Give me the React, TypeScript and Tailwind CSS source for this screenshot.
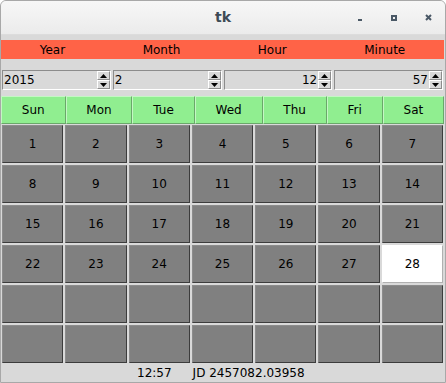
import React from "react";

const labels = ["Year", "Month", "Hour", "Minute"];
const days = ["Sun", "Mon", "Tue", "Wed", "Thu", "Fri", "Sat"];

const spins = [
  { value: "2015", right: false },
  { value: "2", right: false },
  { value: "12", right: true },
  { value: "57", right: true },
];

// February 2015 starts on a Sunday
const cells: (number | null)[] = Array.from({ length: 42 }, (_, i) =>
  i < 28 ? i + 1 : null
);

const Spinbox: React.FC<{ value: string; right: boolean }> = ({ value, right }) => (
  <div className="flex-1 h-[20px] flex border border-t-[#8c8c8c] border-l-[#8c8c8c] border-b-white border-r-white bg-[#d9d9d9]">
    <div
      className={
        "flex-1 flex items-center px-[1px] text-[12px] text-black " +
        (right ? "justify-end" : "justify-start")
      }
    >
      {value}
    </div>
    <div className="w-[13px] flex flex-col">
      <div className="flex-1 flex items-center justify-center bg-[#d9d9d9] border border-t-white border-l-white border-b-[#8c8c8c] border-r-[#8c8c8c]">
        <svg width="7" height="4" viewBox="0 0 7 4">
          <path d="M3.5 0 L7 4 L0 4 Z" fill="#000" />
        </svg>
      </div>
      <div className="flex-1 flex items-center justify-center bg-[#d9d9d9] border border-t-white border-l-white border-b-[#8c8c8c] border-r-[#8c8c8c]">
        <svg width="7" height="4" viewBox="0 0 7 4">
          <path d="M0 0 L7 0 L3.5 4 Z" fill="#000" />
        </svg>
      </div>
    </div>
  </div>
);

export default function App() {
  return (
    <div
      className="w-[446px] h-[383px] flex flex-col bg-[#d9d9d9] border border-[#a8a8a8] rounded-t-[6px] overflow-hidden"
      style={{ fontFamily: '"DejaVu Sans", sans-serif' }}
    >
      {/* Title bar */}
      <div className="h-[34px] shrink-0 relative flex items-center justify-center bg-gradient-to-b from-[#f7f7f7] to-[#ebebeb] border-b border-[#dcdcdc]">
        <span className="text-[14px] font-bold text-[#3d4a56]">tk</span>
        <div className="absolute right-0 top-0 h-full flex items-center">
          <div className="w-[34px] flex justify-center pt-[4px]">
            <div className="w-[4px] h-[2px] bg-[#4a5866]" />
          </div>
          <div className="w-[34px] flex justify-center">
            <div className="w-[6px] h-[6px] border-2 border-[#4a5866]" />
          </div>
          <div className="w-[34px] flex justify-center">
            <svg width="7" height="7" viewBox="0 0 7 7">
              <path d="M1 1 L6 6 M6 1 L1 6" stroke="#4a5866" strokeWidth="2" />
            </svg>
          </div>
        </div>
      </div>

      {/* Labels */}
      <div className="mt-[5px] mx-[0px] mr-[1px] h-[19px] flex bg-[#ff6347] text-[12px] text-black">
        {labels.map((l) => (
          <div key={l} className="flex-auto flex items-center justify-center">
            {l}
          </div>
        ))}
      </div>

      {/* Spinboxes */}
      <div className="mt-[11px] ml-[1px] mr-[2px] flex gap-[2px]">
        {spins.map((s, i) => (
          <Spinbox key={i} value={s.value} right={s.right} />
        ))}
      </div>

      {/* Day headers */}
      <div className="mt-[6px] mr-[1px] h-[28px] flex">
        {days.map((d) => (
          <div
            key={d}
            className="flex-auto flex items-center justify-center bg-[#90ee90] border border-t-[#c4f7c4] border-l-[#c4f7c4] border-b-[#6aa86a] border-r-[#6aa86a] text-[12px] text-black"
          >
            {d}
          </div>
        ))}
      </div>

      {/* Day grid */}
      <div className="mt-[1px] ml-[1px] mr-[2px] h-[238px] grid grid-cols-7 grid-rows-6 gap-[2px]">
        {cells.map((n, i) => (
          <div
            key={i}
            className={
              "flex items-center justify-center text-[12px] text-black border " +
              (n === 28
                ? "bg-white border-t-white border-l-white border-b-[#b0b0b0] border-r-[#b0b0b0]"
                : "bg-[#808080] border-t-[#8c8c8c] border-l-[#8c8c8c] border-b-[#3c3c3c] border-r-[#3c3c3c]")
            }
          >
            {n ?? ""}
          </div>
        ))}
      </div>

      {/* Footer */}
      <div className="flex-1 flex items-center text-[12px] text-black pl-[136px]">
        <span>12:57</span>
        <span className="ml-[21px]">JD 2457082.03958</span>
      </div>
    </div>
  );
}
